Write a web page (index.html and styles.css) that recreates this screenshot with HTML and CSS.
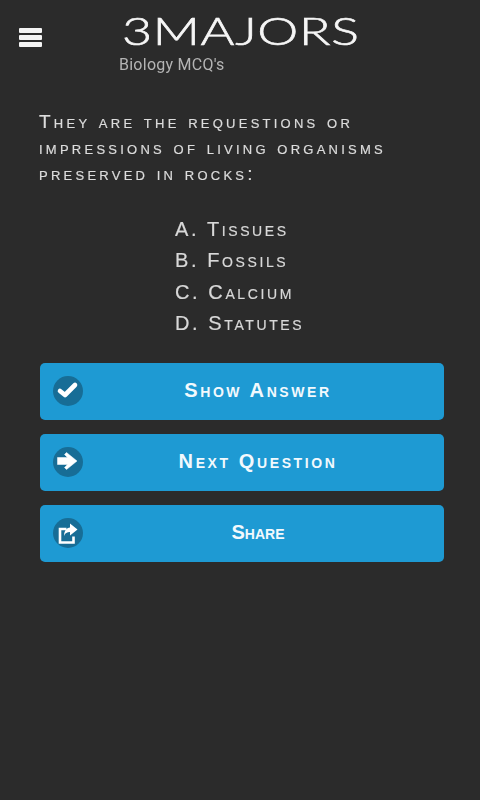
FILE: index.html
```html
<!DOCTYPE html>
<html lang="en">
<head>
<meta charset="utf-8">
<title>3Majors Biology MCQ's</title>
<link rel="stylesheet" href="styles.css">
</head>
<body>
<header class="header">
  <div class="menu" aria-label="Menu"><span></span><span></span><span></span></div>
  <div class="brand">
    <div class="logo">3MAJORS</div>
    <div class="subtitle">Biology MCQ's</div>
  </div>
</header>
<main class="content">
  <p class="question">They are the requestions or impressions of living organisms preserved in rocks:</p>
  <ol class="options">
    <li>A. Tissues</li>
    <li>B. Fossils</li>
    <li>C. Calcium</li>
    <li>D. Statutes</li>
  </ol>
  <div class="actions">
    <button class="btn">
      <span class="badge"><svg viewBox="0 0 30 30" width="30" height="30"><path d="M7 15l5 4L22 9" fill="none" stroke="#fff" stroke-width="4.600" stroke-linejoin="round" stroke-linecap="round"/></svg></span>
      <span class="label">Show Answer</span>
    </button>
    <button class="btn">
      <span class="badge"><svg viewBox="0 0 30 30" width="30" height="30"><path d="M4.500 10.500H14.500L11.500 7.500 13.500 5.500 24 14 13.500 22.500 11.500 20.500 14.500 17.500H4.500z" fill="#fff" stroke="#fff" stroke-width="0.500" stroke-linejoin="round"/></svg></span>
      <span class="label">Next Question</span>
    </button>
    <button class="btn">
      <span class="badge"><svg viewBox="0 0 30 30" width="30" height="30"><path d="M13.500 11H7V24.500H20.500V18.500" fill="none" stroke="#fff" stroke-width="2.600"/><path d="M17 5.500l7.500 6-7.500 6v-3.500c-3 0-5 1-6 4 0-5 2.500-8 6-8.500z" fill="#fff"/></svg></span>
      <span class="label label-tight">Share</span>
    </button>
  </div>
</main>
</body>
</html>
```

FILE: styles.css
```css
* { box-sizing: border-box; }
html, body { margin: 0; height: 100%; background: #2b2b2b; }
body {
  width: 480px;
  min-height: 800px;
  color: #e6e6e6;
  font-family: "Liberation Sans", Arial, sans-serif;
  overflow: hidden;
}
.header, .content { filter: blur(0.4px); }
.header {
  display: flex;
  align-items: flex-start;
  height: 100px;
  padding: 16px 0 0 19px;
}
.menu {
  display: flex;
  flex-direction: column;
  gap: 2px;
  width: 23px;
  margin-top: 12px;
}
.menu span {
  display: block;
  height: 5px;
  background: #f4f4f4;
  border-radius: 1px;
}
.brand { margin-left: 77px; }
.logo {
  font-family: Lato, sans-serif;
  font-weight: 300;
  font-size: 37px;
  line-height: 30px;
  height: 30px;
  margin-left: 2.500px;
  color: #f6f6f6;
  -webkit-text-stroke: 0.6px #f6f6f6;
  white-space: nowrap;
  transform: scaleX(1.4);
  transform-origin: left center;
  letter-spacing: 0.5px;
}
.subtitle {
  margin-top: 9px;
  font-family: Roboto, sans-serif;
  font-size: 16px;
  line-height: 20px;
  letter-spacing: 0.25px;
  color: #b4b4b4;
  white-space: nowrap;
}
.content { padding: 0 36px 0 40px; }
.question {
  margin: 9px 0 0 -1px;
  width: 370px;
  font-variant: small-caps;
  font-size: 19px;
  line-height: 26px;
  letter-spacing: 3.25px;
  color: #dcdcdc;
  -webkit-text-stroke: 0.2px #dcdcdc;
}
.options {
  list-style: none;
  margin: 27px 0 0 135px;
  padding: 0;
  font-variant: small-caps;
  font-size: 20px;
  line-height: 31.4px;
  letter-spacing: 2.6px;
  color: #d8d8d8;
  -webkit-text-stroke: 0.2px #d8d8d8;
}
.actions {
  display: flex;
  flex-direction: column;
  gap: 14px;
  margin-top: 23px;
}
.btn {
  position: relative;
  display: flex;
  align-items: center;
  justify-content: center;
  width: 404px;
  height: 57px;
  border: 0;
  border-radius: 5px;
  padding: 0 0 1px 32px;
  background: #1e9ad3;
  color: #f2f9fd;
  font-family: "Liberation Sans", Arial, sans-serif;
}
.badge {
  position: absolute;
  left: 12.500px;
  top: 13.500px;
  width: 30px;
  height: 30px;
  border-radius: 50%;
  background: #176d96;
}
.badge svg { display: block; }
.label {
  font-variant: small-caps;
  font-weight: 700;
  font-size: 20px;
  letter-spacing: 2.6px;
  white-space: nowrap;
}
.label-tight { letter-spacing: 0; }
```
